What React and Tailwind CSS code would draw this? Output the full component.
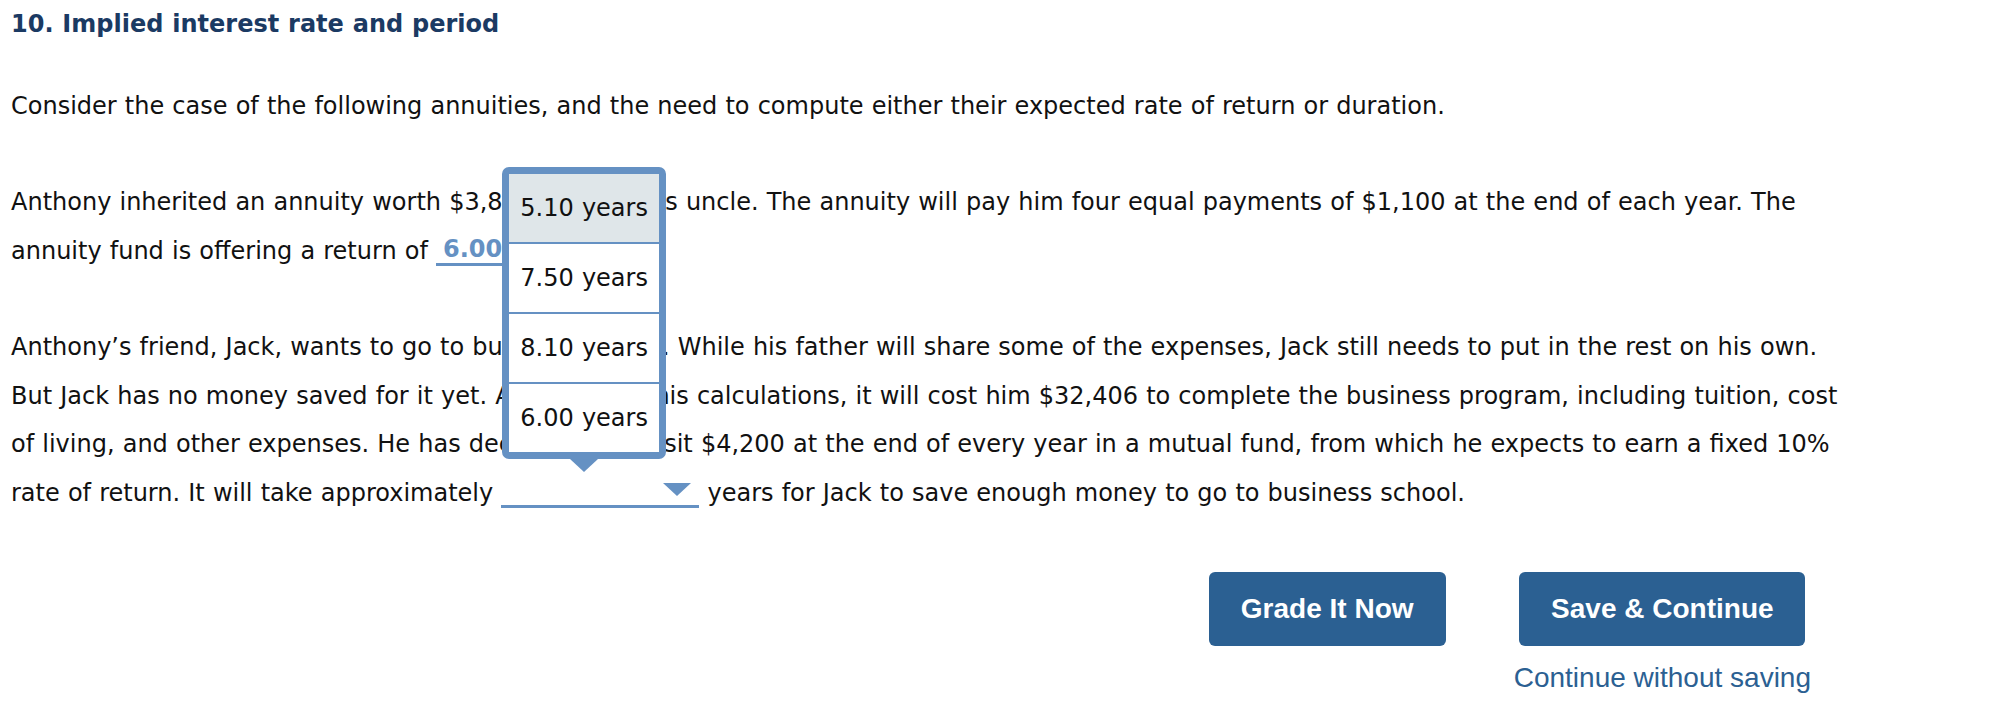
import React from "react";

const options = ["5.10 years", "7.50 years", "8.10 years", "6.00 years"];

const Caret = ({ className }) => (
  <svg className={className} width="28" height="13" viewBox="0 0 28 13">
    <path d="M0 0H28L14 13Z" fill="#6591c3" />
  </svg>
);

// open list of answer choices, sits above the select it belongs to
const OptionsPopup = () => (
  <div className="absolute bottom-[46px] left-[1px] z-10 w-[164px] rounded-[7px] border-[7px] border-[#6591c3] bg-white text-[24px] font-normal text-[#111]">
    <ul>
      {options.map((opt, i) => (
        <li
          key={opt}
          className={
            i === 0
              ? "flex h-[68px] items-center bg-[#dfe6e9] pl-[11px] leading-none"
              : "flex h-[70px] items-center border-t-2 border-[#6591c3] pl-[11px] leading-none"
          }
        >
          {opt}
        </li>
      ))}
    </ul>
    <Caret className="absolute left-1/2 top-[calc(100%+7px)] -translate-x-1/2" />
  </div>
);

const Dropdown = ({ value, children }) => (
  <span className="relative inline-block w-[198px] border-b-[3px] border-[#6591c3] pl-[7px] align-[2px] font-bold leading-[28px] text-[#6591c3]">
    {value || "\u00a0"}
    <Caret className="absolute right-[8px] top-[6px]" />
    {children}
  </span>
);

export default function App() {
  return (
    <div className="min-h-screen bg-white font-['DejaVu_Sans',Verdana,sans-serif] text-[24px] leading-[48.5px] text-[#111] [word-spacing:0.5px]">
      <div className="px-[11px]">
        <h2 className="font-bold text-[#1b3a63]">
          10. Implied interest rate and period
        </h2>

        <p className="mt-[33px]">
          Consider the case of the following annuities, and the need to
          compute either their expected rate of return or duration.
        </p>

        <p className="mt-[48px] whitespace-nowrap">
          Anthony inherited an annuity worth $3,811.62 from his uncle. The
          annuity will pay him four equal payments of $1,100 at the end of
          each year. The
          <br />
          annuity fund is offering a return of <Dropdown value="6.00%" />.
        </p>

        <p className="mt-[48px] whitespace-nowrap">
          Anthony’s friend, Jack, wants to go to business school. While his
          father will share some of the expenses, Jack still needs to put in
          the rest on his own.
          <br />
          But Jack has no money saved for it yet. According to his
          calculations, it will cost him $32,406 to complete the business
          program, including tuition, cost
          <br />
          of living, and other expenses. He has decided to deposit $4,200 at
          the end of every year in a mutual fund, from which he expects to
          earn a fixed 10%
          <br />
          rate of return. It will take approximately{" "}
          <Dropdown>
            <OptionsPopup />
          </Dropdown>{" "}
          years for Jack to save enough money to go to business school.
        </p>
      </div>

      {/* actions */}
      <div className="mt-[55px] flex items-start justify-end gap-[68px] pr-[181px] font-['Liberation_Sans',Arial,sans-serif] [word-spacing:0]">
        <button className="h-[74px] w-[237px] rounded-[6px] bg-[#2b6092] text-[28px] font-bold text-white">
          Grade It Now
        </button>
        <div className="flex flex-col items-center">
          <button className="h-[74px] w-[286px] rounded-[6px] bg-[#2b6092] text-[28px] font-bold text-white">
            Save &amp; Continue
          </button>
          <a className="mt-[16px] cursor-pointer text-[28px] leading-[32px] text-[#2b6092]">
            Continue without saving
          </a>
        </div>
      </div>
    </div>
  );
}
